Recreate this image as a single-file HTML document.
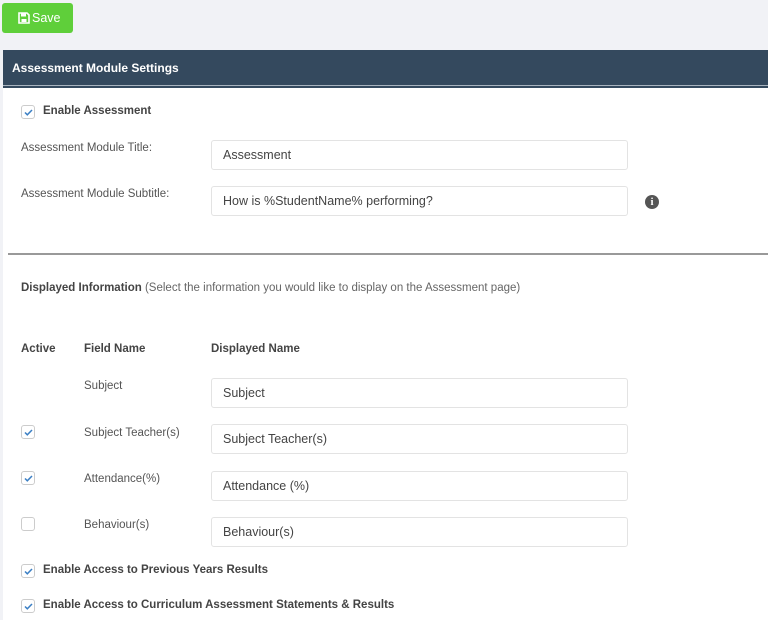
<!DOCTYPE html>
<html><head><style>
*{box-sizing:border-box;margin:0;padding:0}
body{width:768px;height:620px;background:#f1f2f6;font-family:"Liberation Sans",sans-serif;position:relative;overflow:hidden;color:#555}
.a{position:absolute}
.btn{left:2px;top:3px;width:71px;height:30px;background:#5fcf3a;border-radius:3px;color:#fff;font-size:12.5px;line-height:30px;padding-left:30px}
.panel{left:3px;top:50px;width:765px;height:570px;background:#fff}
.hdr{left:3px;top:50px;width:765px;height:35px;background:#34495e;color:#fff;font-size:12px;font-weight:bold;line-height:36px;padding-left:9px}
.hl{left:3px;top:85px;width:765px;height:1px;background:#a9b4bf}
.hl2{left:3px;top:86px;width:765px;height:2px;background:#34495e}
.cb{width:14px;height:14px;border:1px solid #ccc;border-radius:3px;background:#fff}
.cb svg{position:absolute;left:1px;top:1px}
.lbl{font-size:11.5px;color:#555}
.b{font-weight:bold;font-size:11.5px;color:#444}
.in{left:211px;width:417px;height:30px;border:1px solid #e3e3e3;border-radius:3px;font-size:12.5px;color:#444;line-height:29px;padding-left:11px;background:#fff}
.div{left:8px;top:253px;width:760px;height:2px;background:#999}
</style></head><body>
<div class="a btn"><svg width="12" height="12" viewBox="0 0 12 12" style="position:absolute;left:16px;top:9px"><path d="M1 1h8l2 2v8H1z" fill="none" stroke="#fff" stroke-width="1.6"/><rect x="3" y="1.5" width="5" height="3" fill="#fff"/><rect x="3.5" y="7" width="5" height="3" fill="#fff"/></svg>Save</div>
<div class="a panel"></div>
<div class="a hdr">Assessment Module Settings</div>
<div class="a hl"></div><div class="a hl2"></div>

<div class="a cb" style="left:21px;top:105px"><svg width="11" height="11" viewBox="0 0 11 11"><path d="M2 5.5l2.3 2.3L9 3" fill="none" stroke="#3b7fc4" stroke-width="1.5"/></svg></div>
<div class="a b" style="left:43px;top:105px">Enable Assessment</div>

<div class="a lbl" style="left:21px;top:142px">Assessment Module Title:</div>
<div class="a in" style="top:140px">Assessment</div>
<div class="a lbl" style="left:21px;top:188px">Assessment Module Subtitle:</div>
<div class="a in" style="top:186px">How is %StudentName% performing?</div>
<div class="a" style="left:645px;top:195px;width:14px;height:14px;border-radius:50%;background:#555;color:#fff;font-size:11px;font-weight:bold;text-align:center;line-height:14px;font-family:'Liberation Serif',serif">i</div>

<div class="a div"></div>

<div class="a" style="left:21px;top:282px;font-size:11.5px;color:#666"><b style="color:#444">Displayed Information</b> (Select the information you would like to display on the Assessment page)</div>

<div class="a b" style="left:21px;top:343px">Active</div>
<div class="a b" style="left:84px;top:343px">Field Name</div>
<div class="a b" style="left:211px;top:343px">Displayed Name</div>

<div class="a lbl" style="left:84px;top:380px">Subject</div>
<div class="a in" style="top:378px">Subject</div>

<div class="a cb" style="left:21px;top:425px"><svg width="11" height="11" viewBox="0 0 11 11"><path d="M2 5.5l2.3 2.3L9 3" fill="none" stroke="#3b7fc4" stroke-width="1.5"/></svg></div>
<div class="a lbl" style="left:84px;top:427px">Subject Teacher(s)</div>
<div class="a in" style="top:424px">Subject Teacher(s)</div>

<div class="a cb" style="left:21px;top:471px"><svg width="11" height="11" viewBox="0 0 11 11"><path d="M2 5.5l2.3 2.3L9 3" fill="none" stroke="#3b7fc4" stroke-width="1.5"/></svg></div>
<div class="a lbl" style="left:84px;top:473px">Attendance(%)</div>
<div class="a in" style="top:471px">Attendance (%)</div>

<div class="a cb" style="left:21px;top:517px"></div>
<div class="a lbl" style="left:84px;top:519px">Behaviour(s)</div>
<div class="a in" style="top:517px">Behaviour(s)</div>

<div class="a cb" style="left:21px;top:564px"><svg width="11" height="11" viewBox="0 0 11 11"><path d="M2 5.5l2.3 2.3L9 3" fill="none" stroke="#3b7fc4" stroke-width="1.5"/></svg></div>
<div class="a b" style="left:43px;top:564px">Enable Access to Previous Years Results</div>
<div class="a cb" style="left:21px;top:599px"><svg width="11" height="11" viewBox="0 0 11 11"><path d="M2 5.5l2.3 2.3L9 3" fill="none" stroke="#3b7fc4" stroke-width="1.5"/></svg></div>
<div class="a b" style="left:43px;top:599px">Enable Access to Curriculum Assessment Statements &amp; Results</div>
</body></html>
